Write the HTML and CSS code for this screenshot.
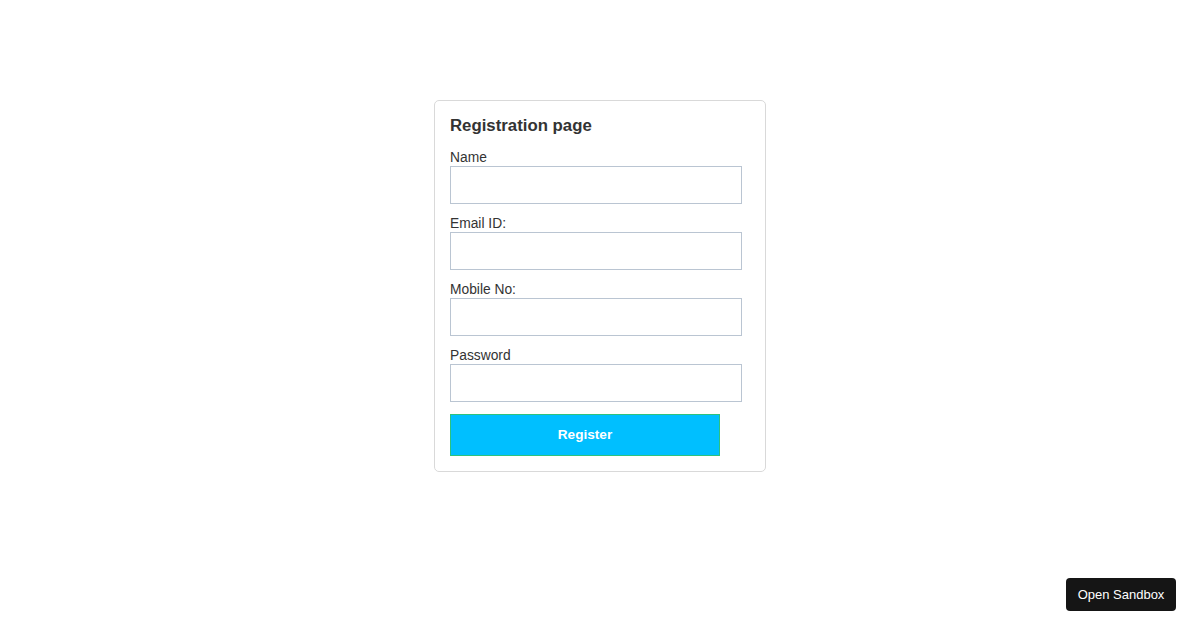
FILE: index.html
```html
<!DOCTYPE html>
<html>
<head>
<meta charset="utf-8">
<link rel="stylesheet" href="styles.css">
</head>
<body>
<div class="page">
  <form class="card">
    <h2 class="title">Registration page</h2>
    <label class="label">Name</label>
    <input class="field" type="text">
    <label class="label">Email ID:</label>
    <input class="field" type="text">
    <label class="label">Mobile No:</label>
    <input class="field" type="text">
    <label class="label">Password</label>
    <input class="field" type="password">
    <button class="submit" type="button">Register</button>
  </form>
</div>
<a class="sandbox">Open Sandbox</a>
</body>
</html>
```
FILE: styles.css
```css
html, body {
  margin: 0;
  padding: 0;
  background: #fff;
  font-family: "Liberation Sans", Arial, sans-serif;
  color: #333;
}
.page {
  display: flex;
  justify-content: center;
  padding-top: 100px;
}
.card {
  width: 300px;
  border: 1px solid #d9d9d9;
  border-radius: 5px;
  padding: 15px;
  display: flex;
  flex-direction: column;
  align-items: flex-start;
}
.title {
  margin: 0 0 13px;
  font-size: 16.8px;
  line-height: 20px;
  font-weight: bold;
  color: #333;
}
.label {
  display: block;
  font-size: 13.8px;
  line-height: 16px;
  padding-top: 1px;
  color: #333;
}
.field {
  box-sizing: border-box;
  width: 292px;
  height: 38px;
  margin: 0 0 11px;
  border: 1px solid #bac5d2;
  border-radius: 0;
  padding: 0 8px;
  outline: none;
  background: #fff;
}
.submit {
  box-sizing: border-box;
  margin-top: 1px;
  width: 270px;
  height: 42px;
  background: #00bfff;
  border: 1px solid #2ec27e;
  color: #fff;
  font-family: "Liberation Sans", Arial, sans-serif;
  font-weight: bold;
  font-size: 13.6px;
  padding: 0 0 1px;
}
.sandbox {
  position: fixed;
  right: 24px;
  bottom: 19px;
  width: 110px;
  height: 33px;
  box-sizing: border-box;
  display: flex;
  align-items: center;
  justify-content: center;
  background: #151515;
  color: #fff;
  border-radius: 4px;
  font-size: 13px;
}
```
